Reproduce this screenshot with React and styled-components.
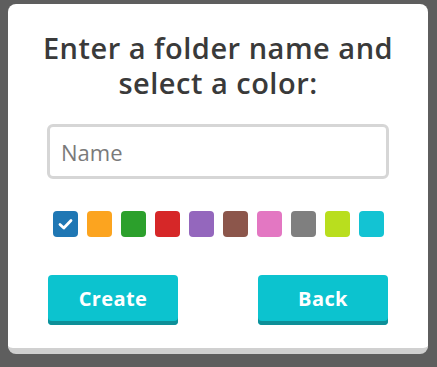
import React, { useState } from "react";
import styled, { createGlobalStyle } from "styled-components";

const GlobalStyle = createGlobalStyle`
  html, body {
    margin: 0;
    padding: 0;
    background: #5e5e5e;
    font-family: "Open Sans", "Noto Sans", sans-serif;
  }
`;

const COLORS = [
  "#1f77b4",
  "#fca41f",
  "#2ca02c",
  "#d62728",
  "#9467bd",
  "#8c564b",
  "#e377c2",
  "#7f7f7f",
  "#b9de1e",
  "#13c3d3",
];

const Page = styled.div`
  height: 367px;
  padding: 4px 9px 0 8px;
  box-sizing: border-box;
`;

const Card = styled.div`
  background: #fff;
  border-radius: 8px;
  border-bottom: 6px solid #d0d0d0;
  padding: 26px 39px 23px;
  display: flex;
  flex-direction: column;
  align-items: center;
`;

const Title = styled.h2`
  margin: 0;
  font-size: 29px;
  line-height: 35px;
  font-weight: 600;
  letter-spacing: 0.5px;
  color: #3a3a3a;
  text-align: center;
  white-space: nowrap;
`;

const NameInput = styled.input`
  margin-top: 24px;
  width: 100%;
  height: 55px;
  box-sizing: border-box;
  border: 3px solid #d6d6d6;
  border-radius: 6px;
  padding: 0 11px;
  font-family: inherit;
  font-size: 22px;
  color: #333;
  outline: none;
  &::placeholder {
    color: #7a7a7a;
  }
`;

const Swatches = styled.div`
  margin-top: 32px;
  display: flex;
  gap: 9px;
  align-self: flex-start;
  padding-left: 6px;
`;

const Swatch = styled.button`
  width: 25px;
  height: 26px;
  border: none;
  padding: 0;
  border-radius: 4px;
  background: ${(p) => p.$color};
  display: flex;
  align-items: center;
  justify-content: center;
  cursor: pointer;
`;

const Buttons = styled.div`
  margin-top: 38px;
  width: 100%;
  display: flex;
  justify-content: space-between;
  padding: 0 1px;
  box-sizing: border-box;
`;

const Button = styled.button`
  width: 130px;
  height: 50px;
  border: none;
  border-radius: 4px;
  background: #0cc3cf;
  box-shadow: inset 0 -4px 0 #0e8f98;
  color: #fff;
  font-family: inherit;
  font-size: 20px;
  font-weight: 700;
  letter-spacing: 0.4px;
  padding: 0 0 4px;
  cursor: pointer;
`;

function Check() {
  return (
    <svg width="15" height="12" viewBox="0 0 15 12">
      <polyline
        points="2,6.5 5.8,10 13,2.5"
        fill="none"
        stroke="#fff"
        strokeWidth="2.8"
        strokeLinecap="round"
        strokeLinejoin="round"
      />
    </svg>
  );
}

export default function App() {
  const [selected, setSelected] = useState(0);
  return (
    <>
      <GlobalStyle />
      <Page>
        <Card>
          <Title>
            Enter a folder name and
            <br />
            select a color:
          </Title>
          <NameInput placeholder="Name" />
          <Swatches>
            {COLORS.map((c, i) => (
              <Swatch key={c} $color={c} onClick={() => setSelected(i)}>
                {selected === i && <Check />}
              </Swatch>
            ))}
          </Swatches>
          <Buttons>
            <Button>Create</Button>
            <Button>Back</Button>
          </Buttons>
        </Card>
      </Page>
    </>
  );
}
